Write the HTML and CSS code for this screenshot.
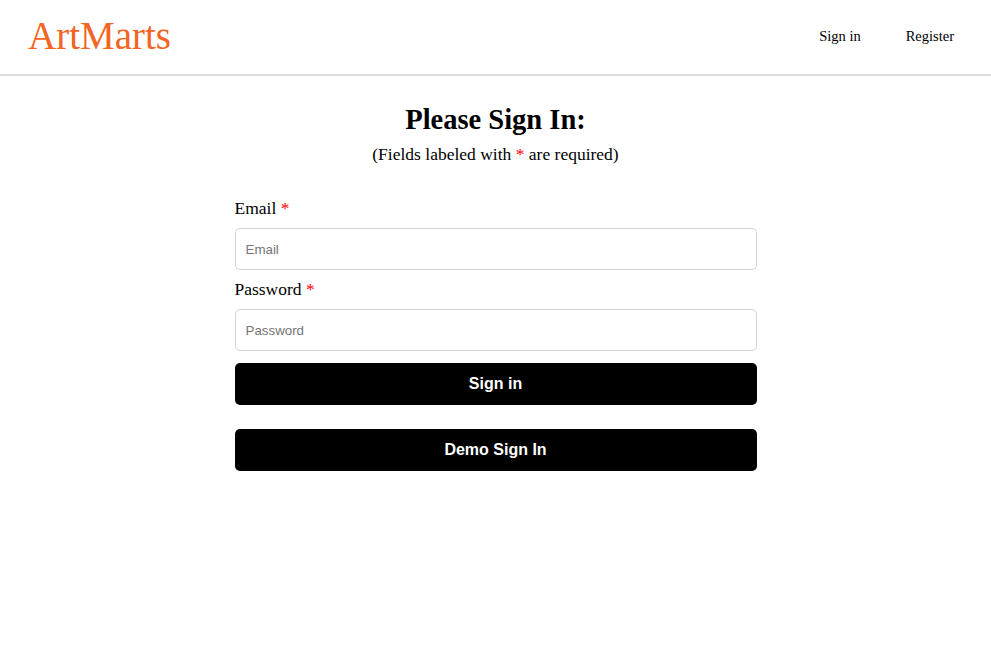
FILE: index.html
```html
<!DOCTYPE html>
<html lang="en">
<head>
<meta charset="utf-8">
<title>ArtMarts - Sign In</title>
<link rel="stylesheet" href="styles.css">
</head>
<body>
<header class="topbar">
  <a class="logo" href="#">ArtMarts</a>
  <nav class="nav">
    <a href="#">Sign in</a>
    <a href="#">Register</a>
  </nav>
</header>
<main class="page">
  <h1 class="title">Please Sign In:</h1>
  <p class="note">(Fields labeled with <span class="req">*</span> are required)</p>
  <form class="form">
    <label class="label" for="email">Email <span class="req">*</span></label>
    <input class="field" id="email" type="email" placeholder="Email">
    <label class="label" for="password">Password <span class="req">*</span></label>
    <input class="field" id="password" type="password" placeholder="Password">
    <button class="btn" type="button">Sign in</button>
    <button class="btn btn-demo" type="button">Demo Sign In</button>
  </form>
</main>
</body>
</html>
```
FILE: styles.css
```css
* { box-sizing: border-box; }
html, body { margin: 0; padding: 0; background: #fff; }
body { font-family: "Liberation Serif", serif; color: #000; }
a { color: inherit; text-decoration: none; }

.topbar {
  height: 76px;
  border-bottom: 2px solid #dcdcdc;
  display: flex;
  align-items: center;
  justify-content: space-between;
  padding: 0 37px 2px 28px;
}
.logo { font-size: 39px; color: #f26522; line-height: 1; padding-bottom: 2px; }
.nav { display: flex; gap: 45px; font-size: 14.5px; }

.page { width: 522px; margin: 0 auto; padding-top: 27px; }
.title { margin: 0; font-size: 28.5px; line-height: 34px; font-weight: 700; text-align: center; }
.note { margin: 7px 0 0; font-size: 17.5px; line-height: 20px; text-align: center; }
.req { color: #f00; }

.form { display: flex; flex-direction: column; margin-top: 34px; }
.label { font-size: 17.5px; line-height: 20px; margin-bottom: 10px; }
.field {
  height: 42px;
  border: 1px solid #d4d4d4;
  border-radius: 5px;
  padding: 0 10px;
  margin-bottom: 9px;
  font: 13.333px "Liberation Sans", sans-serif;
  color: #000;
}
.field::placeholder { color: #757575; opacity: 1; }
.btn {
  height: 42px;
  border: 0;
  border-radius: 5px;
  background: #000;
  color: #fff;
  font: 700 16px "Liberation Sans", sans-serif;
  margin-top: 3px;
}
.btn-demo { margin-top: 24px; }
```
